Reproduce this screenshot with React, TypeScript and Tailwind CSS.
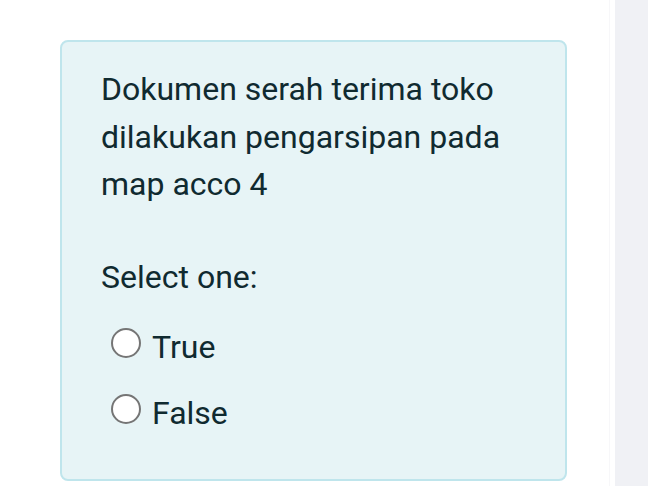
import { useState } from 'react'

const OPTIONS = ['True', 'False']

export default function App() {
  const [answer, setAnswer] = useState<string | null>(null)

  return (
    <div className="flex h-[486px] w-[648px] overflow-hidden bg-white" style={{ fontFamily: 'Roboto, "Noto Sans", sans-serif' }}>
      <div className="flex-1 pl-[60px] pr-[42px] pt-[40px]">
        <div className="h-[441px] rounded-[8px] border-2 border-[#bfe5ec] bg-[#e7f4f6] pl-[39px] pr-[20px] pt-[24px] text-[#102a30]">
          <p className="text-[32px] leading-[47.5px]">
            Dokumen serah terima toko dilakukan pengarsipan pada map acco 4
          </p>
          <p className="mt-[48px] text-[32px] leading-[40px]">Select one:</p>
          <div className="mt-[30px] flex flex-col gap-[26px] pl-[10px]">
            {OPTIONS.map((opt) => (
              <label key={opt} className="flex cursor-pointer items-start gap-[11px] text-[32px] leading-[40px]">
                <span
                  onClick={() => setAnswer(opt)}
                  className="mt-[1px] flex h-[30px] w-[30px] items-center justify-center rounded-full border-2 border-[#757575] bg-white"
                >
                  {answer === opt && <span className="h-[14px] w-[14px] rounded-full bg-[#0f6cbf]" />}
                </span>
                <span>{opt}</span>
              </label>
            ))}
          </div>
        </div>
      </div>
      <div className="w-px bg-[#f7f7f9]" />
      <div className="w-[5px] bg-white" />
      <div className="w-[33px] bg-[#f0f1f5]" />
    </div>
  )
}
